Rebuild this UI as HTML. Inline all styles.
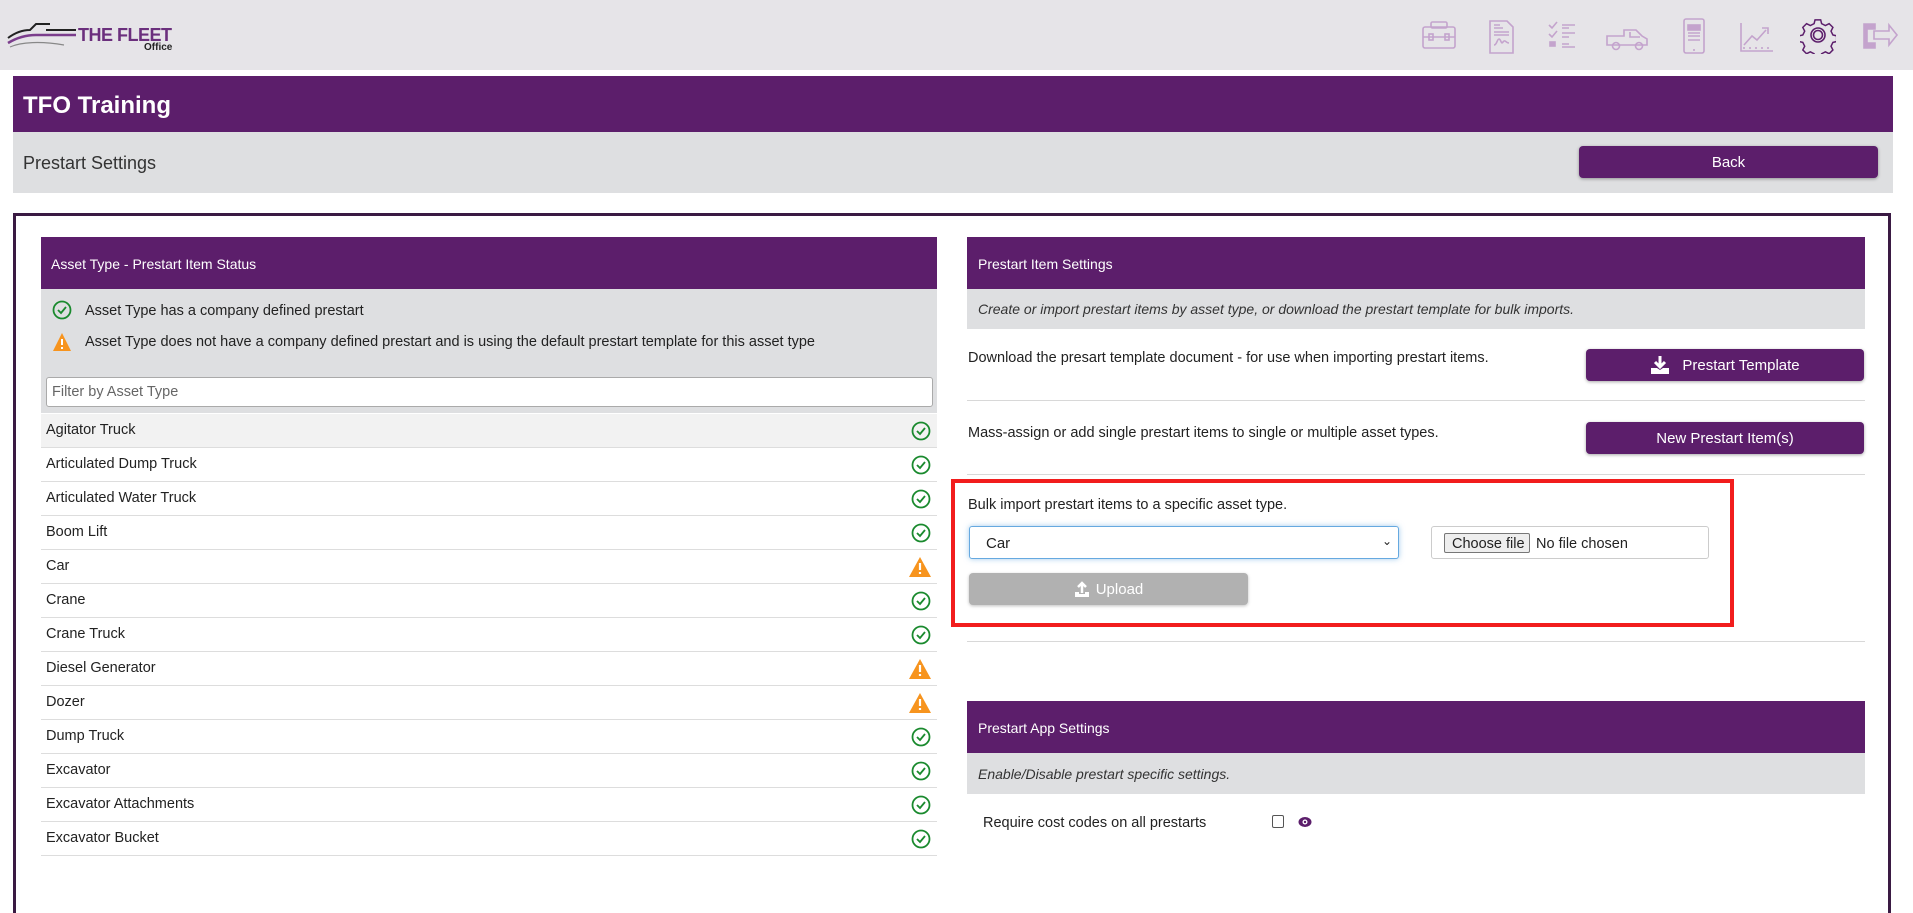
<!DOCTYPE html>
<html><head><meta charset="utf-8"><style>
*{box-sizing:border-box;margin:0;padding:0}
body{width:1913px;height:846px;overflow:hidden;background:#fff;font-family:"Liberation Sans",Arial,sans-serif;color:#222;position:relative}
.abs{position:absolute}
.hdr{left:0;top:0;width:1913px;height:70px;background:#e6e4e8}
.purple{background:#5c1e6b;color:#fff}
.btn{background:#5c1e6b;color:#fff;border-radius:4px;box-shadow:0 1px 3px rgba(0,0,0,.35);font-size:15px;display:flex;align-items:center;justify-content:center}
.row{position:absolute;left:41px;width:896px;height:34px;border-bottom:1px solid #ddd;font-size:14.5px;line-height:33px;padding-left:5px}
.row svg{position:absolute;right:6px;top:7px}
.sep{position:absolute;left:967px;width:898px;height:1px;background:#d8d8d8}
</style></head><body>
<div class="abs hdr"></div>
<!-- logo -->
<svg class="abs" style="left:6px;top:18px" width="70" height="34" viewBox="0 0 70 34">
<path d="M2 20 C10 14 18 12 24 12 L30 6 L44 6" stroke="#222" stroke-width="2" fill="none"/>
<path d="M2 25 C12 19 22 17 30 17 L70 17" stroke="#7b3d8c" stroke-width="2.5" fill="none"/>
<path d="M40 12 L70 12" stroke="#222" stroke-width="2" fill="none"/>
<path d="M4 29 C15 24 35 23 58 27" stroke="#888" stroke-width="1.2" fill="none"/>
</svg>
<div class="abs" style="left:78px;top:25px;font-size:18px;font-weight:bold;color:#6b2f7d;letter-spacing:-0.5px">THE FLEET</div>
<div class="abs" style="left:144px;top:42px;font-size:10px;font-weight:bold;color:#222">Office</div>
<!-- header icons -->
<svg class="abs" style="left:1420px;top:18px" width="493" height="36" viewBox="0 0 493 36" fill="none" stroke="#c4a3cd" stroke-width="1.6">
<rect x="3" y="9" width="32" height="21" rx="2"/><rect x="11" y="4" width="16" height="6" rx="1.5"/><path d="M3 19h32"/><rect x="9" y="16" width="4" height="6"/><rect x="25" y="16" width="4" height="6"/>
<path d="M70 3h17l6 6v26H70z"/><path d="M74 7h6M74 10h9M74 14h15M74 17h15M74 27c3 0 3-6 5-6s2 6 4 3s3 1 6 1"/>
<path d="M129 7l3 3 5-6M129 16l3 3 5-6M142 7h13M142 10h7M142 15h13M142 19h7M142 26h7M142 29h13"/><rect x="130" y="24" width="5" height="4" fill="#c4a3cd"/>
<path d="M187 27h40v-6l-5-3-6-6h-12v6h-17z"/><circle cx="196" cy="28" r="3.5"/><circle cx="219" cy="28" r="3.5"/><path d="M210 14v5h10"/>
<rect x="264" y="1" width="20" height="34" rx="2"/><rect x="268" y="7" width="12" height="5" fill="#c4a3cd"/><path d="M268 15h12M268 18h12M268 22h12M274 31v2"/>
<path d="M321 5v28h32M324 31v-2M330 31v-2M336 31v-2M342 31v-2M348 31v-2M324 27l8-9 5 4 9-10M342 10h6v6"/>
<g transform="translate(62 0)"><path d="M382 11v-5h11v5h-8v14h8v5h-11z" fill="#c4a3cd"/><path d="M392 13h15v-6l8 10-8 10v-6h-15z"/></g>
</svg>
<svg class="abs" style="left:1800px;top:18px" width="36" height="36" viewBox="0 0 36 36" fill="none" stroke="#5c1e6b" stroke-width="1.6">
<path d="M15 2h6l1 4 4 2 4-2 4 4-2 4 2 4 4 1v6l-4 1-2 4 2 4-4 4-4-2-4 2-1 4h-6l-1-4-4-2-4 2-4-4 2-4-2-4-4-1v-6l4-1 2-4-2-4 4-4 4 2 4-2z" transform="scale(0.94) translate(1 0)"/>
<circle cx="18" cy="17" r="7"/><circle cx="18" cy="17" r="4.5"/>
</svg>

<div class="abs purple" style="left:13px;top:76px;width:1880px;height:56px;font-size:24px;font-weight:bold;padding:16px 0 0 10px">TFO Training</div>
<div class="abs" style="left:13px;top:132px;width:1880px;height:61px;background:#dedfe1;font-size:18px;padding:21px 0 0 10px;color:#333">Prestart Settings</div>
<div class="abs btn" style="left:1579px;top:146px;width:299px;height:32px">Back</div>

<div class="abs" style="left:13px;top:213px;width:1878px;height:700px;border:3px solid #3a1a43;border-bottom:none"></div>

<!-- left panel -->
<div class="abs purple" style="left:41px;top:237px;width:896px;height:52px;font-size:14px;padding:19px 0 0 10px">Asset Type - Prestart Item Status</div>
<div class="abs" style="left:41px;top:289px;width:896px;height:124px;background:#dedfe1"></div>
<svg class="abs" style="left:52px;top:300px" width="20" height="20" viewBox="0 0 20 20"><circle cx="10" cy="10" r="8.5" fill="none" stroke="#1a8a2e" stroke-width="1.8"/><path d="M6 10l3 3 5-6" fill="none" stroke="#1a8a2e" stroke-width="1.8"/></svg>
<div class="abs" style="left:85px;top:303px;font-size:14.5px">Asset Type has a company defined prestart</div>
<svg class="abs" style="left:52px;top:332px" width="20" height="20" viewBox="0 0 20 20"><path d="M10 1L19 19H1z" fill="#f7941e"/><path d="M10 7v6M10 15v2" stroke="#fff" stroke-width="2"/></svg>
<div class="abs" style="left:85px;top:334px;font-size:14.5px">Asset Type does not have a company defined prestart and is using the default prestart template for this asset type</div>
<div class="abs" style="left:46px;top:377px;width:887px;height:30px;background:#fff;border:1px solid #aaa;border-radius:3px;font-size:14.5px;color:#666;padding:6px 0 0 5px">Filter by Asset Type</div>

<div class="row" style="top:414px;background:#f2f2f2">Agitator Truck<svg width="20" height="20" viewBox="0 0 20 20"><circle cx="10" cy="10" r="8.5" fill="none" stroke="#1a8a2e" stroke-width="1.8"/><path d="M6 10l3 3 5-6" fill="none" stroke="#1a8a2e" stroke-width="1.8"/></svg></div>
<div class="row" style="top:448px">Articulated Dump Truck<svg width="20" height="20" viewBox="0 0 20 20"><circle cx="10" cy="10" r="8.5" fill="none" stroke="#1a8a2e" stroke-width="1.8"/><path d="M6 10l3 3 5-6" fill="none" stroke="#1a8a2e" stroke-width="1.8"/></svg></div>
<div class="row" style="top:482px">Articulated Water Truck<svg width="20" height="20" viewBox="0 0 20 20"><circle cx="10" cy="10" r="8.5" fill="none" stroke="#1a8a2e" stroke-width="1.8"/><path d="M6 10l3 3 5-6" fill="none" stroke="#1a8a2e" stroke-width="1.8"/></svg></div>
<div class="row" style="top:516px">Boom Lift<svg width="20" height="20" viewBox="0 0 20 20"><circle cx="10" cy="10" r="8.5" fill="none" stroke="#1a8a2e" stroke-width="1.8"/><path d="M6 10l3 3 5-6" fill="none" stroke="#1a8a2e" stroke-width="1.8"/></svg></div>
<div class="row" style="top:550px">Car<svg width="22" height="20" viewBox="0 0 22 20"><path d="M11 0L22 20H0z" fill="#f7941e"/><path d="M11 6v7M11 15v2" stroke="#fff" stroke-width="2.2"/></svg></div>
<div class="row" style="top:584px">Crane<svg width="20" height="20" viewBox="0 0 20 20"><circle cx="10" cy="10" r="8.5" fill="none" stroke="#1a8a2e" stroke-width="1.8"/><path d="M6 10l3 3 5-6" fill="none" stroke="#1a8a2e" stroke-width="1.8"/></svg></div>
<div class="row" style="top:618px">Crane Truck<svg width="20" height="20" viewBox="0 0 20 20"><circle cx="10" cy="10" r="8.5" fill="none" stroke="#1a8a2e" stroke-width="1.8"/><path d="M6 10l3 3 5-6" fill="none" stroke="#1a8a2e" stroke-width="1.8"/></svg></div>
<div class="row" style="top:652px">Diesel Generator<svg width="22" height="20" viewBox="0 0 22 20"><path d="M11 0L22 20H0z" fill="#f7941e"/><path d="M11 6v7M11 15v2" stroke="#fff" stroke-width="2.2"/></svg></div>
<div class="row" style="top:686px">Dozer<svg width="22" height="20" viewBox="0 0 22 20"><path d="M11 0L22 20H0z" fill="#f7941e"/><path d="M11 6v7M11 15v2" stroke="#fff" stroke-width="2.2"/></svg></div>
<div class="row" style="top:720px">Dump Truck<svg width="20" height="20" viewBox="0 0 20 20"><circle cx="10" cy="10" r="8.5" fill="none" stroke="#1a8a2e" stroke-width="1.8"/><path d="M6 10l3 3 5-6" fill="none" stroke="#1a8a2e" stroke-width="1.8"/></svg></div>
<div class="row" style="top:754px">Excavator<svg width="20" height="20" viewBox="0 0 20 20"><circle cx="10" cy="10" r="8.5" fill="none" stroke="#1a8a2e" stroke-width="1.8"/><path d="M6 10l3 3 5-6" fill="none" stroke="#1a8a2e" stroke-width="1.8"/></svg></div>
<div class="row" style="top:788px">Excavator Attachments<svg width="20" height="20" viewBox="0 0 20 20"><circle cx="10" cy="10" r="8.5" fill="none" stroke="#1a8a2e" stroke-width="1.8"/><path d="M6 10l3 3 5-6" fill="none" stroke="#1a8a2e" stroke-width="1.8"/></svg></div>
<div class="row" style="top:822px">Excavator Bucket<svg width="20" height="20" viewBox="0 0 20 20"><circle cx="10" cy="10" r="8.5" fill="none" stroke="#1a8a2e" stroke-width="1.8"/><path d="M6 10l3 3 5-6" fill="none" stroke="#1a8a2e" stroke-width="1.8"/></svg></div>

<!-- right panel -->
<div class="abs purple" style="left:967px;top:237px;width:898px;height:52px;font-size:14px;padding:19px 0 0 11px">Prestart Item Settings</div>
<div class="abs" style="left:967px;top:289px;width:898px;height:40px;background:#dedfe1;font-size:14px;font-style:italic;padding:12px 0 0 11px;color:#333">Create or import prestart items by asset type, or download the prestart template for bulk imports.</div>
<div class="abs" style="left:968px;top:350px;font-size:14.5px">Download the presart template document - for use when importing prestart items.</div>
<div class="abs btn" style="left:1586px;top:349px;width:278px;height:32px"><svg width="20" height="18" viewBox="0 0 20 18" style="margin-right:12px"><path d="M10 0v10M5 6l5 5 5-5" stroke="#fff" stroke-width="3" fill="none"/><path d="M1 12h6l3 2 3-2h6v6H1z" fill="#fff"/></svg>Prestart Template</div>
<div class="sep" style="top:400px"></div>
<div class="abs" style="left:968px;top:425px;font-size:14.5px">Mass-assign or add single prestart items to single or multiple asset types.</div>
<div class="abs btn" style="left:1586px;top:422px;width:278px;height:32px">New Prestart Item(s)</div>
<div class="sep" style="top:474px"></div>

<div class="abs" style="left:951px;top:479px;width:783px;height:148px;border:4px solid #f21d1d"></div>
<div class="abs" style="left:968px;top:497px;font-size:14.5px">Bulk import prestart items to a specific asset type.</div>
<div class="abs" style="left:969px;top:526px;width:430px;height:33px;border:1px solid #66a9e0;border-radius:3px;box-shadow:0 0 6px rgba(102,169,224,.6);font-size:15px;padding:8px 0 0 16px">Car<span style="position:absolute;right:6px;top:7px;font-size:12px">&#8964;</span></div>
<div class="abs" style="left:1431px;top:526px;width:278px;height:33px;border:1px solid #ccc;border-radius:3px;font-size:14.5px">
<span style="position:absolute;left:12px;top:6px;height:20px;width:86px;border:1px solid #777;border-radius:2px;background:#eee;padding:2px 0 0 7px">Choose file</span>
<span style="position:absolute;left:104px;top:9px">No file chosen</span></div>
<div class="abs btn" style="left:969px;top:573px;width:279px;height:32px;background:#b1b1b1;box-shadow:0 1px 3px rgba(0,0,0,.25)"><svg width="16" height="16" viewBox="0 0 16 16" style="margin-right:6px"><path d="M8 12V2M4 6l4-4 4 4" stroke="#fff" stroke-width="2.5" fill="none"/><path d="M1 11h4v2h6v-2h4v5H1z" fill="#fff"/></svg>Upload</div>
<div class="sep" style="top:641px"></div>

<div class="abs purple" style="left:967px;top:701px;width:898px;height:52px;font-size:14px;padding:19px 0 0 11px">Prestart App Settings</div>
<div class="abs" style="left:967px;top:753px;width:898px;height:41px;background:#dedfe1;font-size:14px;font-style:italic;padding:13px 0 0 11px;color:#333">Enable/Disable prestart specific settings.</div>
<div class="abs" style="left:983px;top:815px;font-size:14.5px">Require cost codes on all prestarts</div>
<div class="abs" style="left:1272px;top:815px;width:12px;height:13px;border:1px solid #555;border-radius:2px"></div>
<svg class="abs" style="left:1298px;top:816px" width="14" height="12" viewBox="0 0 14 12"><ellipse cx="7" cy="6" rx="6.5" ry="5" fill="#5c1e6b"/><circle cx="7" cy="6" r="2.5" fill="#fff"/><circle cx="7" cy="6" r="1.2" fill="#5c1e6b"/></svg>
</body></html>
